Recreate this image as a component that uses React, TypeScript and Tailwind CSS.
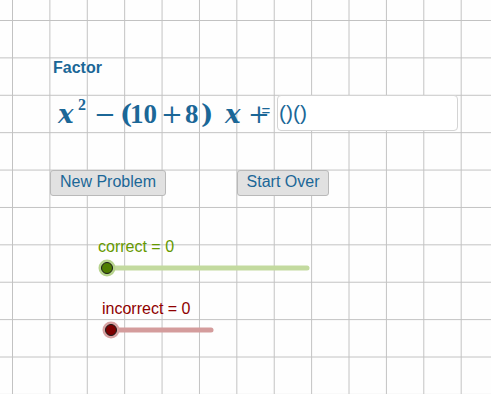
const blue = 'text-[#1b6797]';
const dv = "font-['DejaVu_Serif',serif]";
const lib = "font-['Liberation_Serif','Times_New_Roman',serif]";

function Slider({
  label,
  labelClass,
  offset,
  width,
  track,
  fill,
  halo,
}: {
  label: string;
  labelClass: string;
  offset: string;
  width: number;
  track: string;
  fill: string;
  halo: string;
}) {
  return (
    <div className={`flex flex-col ${offset}`}>
      <div className={`text-[16px] leading-[18px] ${labelClass}`}>{label}</div>
      <svg className="mt-[3px]" width={width + 12} height={18} viewBox={`0 0 ${width + 12} 18`}>
        <line x1={9} y1={9} x2={width} y2={9} stroke={track} strokeWidth={5} strokeLinecap="round" />
        <circle cx={9} cy={9} r={8.5} fill={halo} />
        <circle cx={9} cy={9} r={5.5} fill={fill} stroke="#1a1a1a" strokeWidth={1} />
      </svg>
    </div>
  );
}

export default function App() {
  return (
    <div className="h-[396px] w-[493px] bg-white font-['Liberation_Sans',Arial,sans-serif]">
      <div className="flex h-[394px] w-[491px] flex-col bg-[#fefefe] bg-[linear-gradient(to_right,#c2c2c2_1px,transparent_1px),linear-gradient(to_bottom,#c2c2c2_1px,transparent_1px)] bg-[size:37.4px_37.4px] bg-[position:12px_20px] pl-[50px] pt-[59px]">
        <div className={`ml-[3px] text-[16px] font-bold leading-[18px] ${blue}`}>Factor</div>

        <div className="mt-[18px] flex h-[36px] items-start">
          <div className={`ml-[8px] mt-[6px] flex items-baseline text-[26px] font-bold leading-[26px] ${blue}`}>
            <span className={`w-[20px] italic ${dv}`}>x</span>
            <span className={`w-[12px] -translate-y-[13px] text-[16px] leading-[16px] ${lib}`}>2</span>
            <span className={`w-[30px] text-center font-normal ${dv}`}>−</span>
            <span className={`w-[10px] text-center ${dv}`}>(</span>
            <span className={`w-[29px] text-[27px] ${lib}`}>10</span>
            <span className={`w-[26px] text-center font-normal ${dv}`}>+</span>
            <span className={`w-[16px] text-[27px] ${lib}`}>8</span>
            <span className={`w-[10px] text-center ${dv}`}>)</span>
            <span className={`ml-[14px] w-[23px] italic ${dv}`}>x</span>
            <span className={`w-[22px] text-center font-normal ${dv}`}>+</span>
            <span className="-ml-[10px] w-[12px] -translate-y-[7px] text-center text-[15px] font-normal leading-[15px]">
              =
            </span>
          </div>
          <div
            className={`ml-[5px] flex h-[36px] w-[181px] items-center rounded-[4px] border border-[#d4d4d4] bg-white pl-[1px] text-[21px] leading-[24px] ${blue}`}
          >
            ()()
          </div>
        </div>

        <div className="mt-[39px] flex">
          <button
            type="button"
            className={`h-[26px] w-[116px] rounded-[3px] border border-[#b9b9b9] bg-[#e1e1e1] pb-[2px] text-[16px] leading-[18px] ${blue}`}
          >
            New Problem
          </button>
          <button
            type="button"
            className={`ml-[71px] h-[26px] w-[92px] rounded-[3px] border border-[#b9b9b9] bg-[#e1e1e1] pb-[2px] text-[16px] leading-[18px] ${blue}`}
          >
            Start Over
          </button>
        </div>

        <div className="mt-[42px]">
          <Slider
            label="correct = 0"
            labelClass="text-[#669900]"
            offset="ml-[48px]"
            width={209}
            track="#c3da9f"
            fill="#4e7d00"
            halo="#b7d38d"
          />
        </div>

        <div className="mt-[23px]">
          <Slider
            label="incorrect = 0"
            labelClass="text-[#8f0000]"
            offset="ml-[52px]"
            width={109}
            track="#d49c9c"
            fill="#7d0000"
            halo="#d8a3a3"
          />
        </div>
      </div>
    </div>
  );
}
